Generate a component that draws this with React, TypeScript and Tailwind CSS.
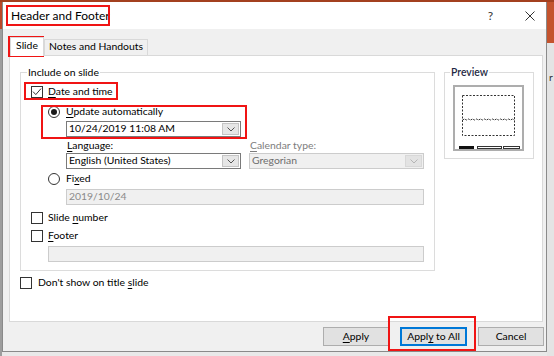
import React from "react";

const F = "font-['Segoe_UI',Lato,sans-serif]";

function U({ children }: { children: React.ReactNode }) {
  return <span className="underline underline-offset-[2px] decoration-[1px]">{children}</span>;
}

function Check({ checked = false }: { checked?: boolean }) {
  return (
    <span className="w-[12px] h-[12px] shrink-0 border border-[#333] bg-white flex items-center justify-center">
      {checked && (
        <svg width="10" height="10" viewBox="0 0 10 10">
          <path d="M1 4.6 L3.8 7.6 L9 1.6" stroke="#333" strokeWidth="1" fill="none" />
        </svg>
      )}
    </span>
  );
}

function Radio({ on = false }: { on?: boolean }) {
  return (
    <span className="w-[12px] h-[12px] shrink-0 rounded-full border border-[#333] bg-white flex items-center justify-center">
      {on && <span className="w-[6px] h-[6px] rounded-full bg-[#1a1a1a]" />}
    </span>
  );
}

function Chevron({ color }: { color: string }) {
  return (
    <svg width="8" height="5" viewBox="0 0 8 5">
      <path d="M0.5 0.5 L4 4 L7.5 0.5" stroke={color} strokeWidth="1" fill="none" />
    </svg>
  );
}

function Combo({ text, disabled = false }: { text: string; disabled?: boolean }) {
  return (
    <div
      className={`w-[175px] h-[16px] flex border ${
        disabled ? "border-[#cccccc] bg-[#f0f0f0] text-[#6d6d6d]" : "border-[#7a7a7a] bg-white"
      }`}
    >
      <span className="flex-1 pl-[2px] leading-[13px] whitespace-nowrap">{text}</span>
      <span
        className={`w-[17px] m-[1px] flex items-center justify-center border ${
          disabled ? "border-[#d8d8d8] bg-[#e3e3e3]" : "border-[#c4c4c4] bg-[#e6e6e6]"
        }`}
      >
        <Chevron color={disabled ? "#b5b5b5" : "#555"} />
      </span>
    </div>
  );
}

function Button({ children, focused = false }: { children: React.ReactNode; focused?: boolean }) {
  return (
    <div
      className={`h-[19px] flex items-center justify-center bg-[#e1e1e1] ${
        focused ? "w-[67px] border-2 border-[#0078d7]" : "w-[66px] border border-[#adadad]"
      }`}
    >
      {children}
    </div>
  );
}

function RedBox({ className }: { className: string }) {
  return <div className={`absolute border-2 border-[#f01414] pointer-events-none ${className}`} />;
}

export default function App() {
  return (
    <div
      className={`relative w-[554px] h-[356px] overflow-hidden bg-[#e9e9e9] text-[10.4px] leading-[13px] text-black ${F} flex flex-col`}
    >
      <div className="h-[2px] shrink-0 bg-[#a3401f]" />
      <div className="flex flex-1 min-h-0">
        <div className="w-[2px] shrink-0 flex flex-col">
          <div className="h-[27px] bg-[#b9492a]" />
          <div className="flex-1 bg-[#9d9d9d]" />
        </div>

        {/* dialog */}
        <div className="w-[545px] h-[350px] shrink-0 flex flex-col border-x border-b border-[#8a8a8a] bg-[#f0f0f0]">
          {/* title bar */}
          <div className="h-[27px] shrink-0 bg-white flex items-center justify-between pl-[8px] pr-[11px]">
            <span className="text-[12px] leading-[14px]">Header and Footer</span>
            <div className="flex items-center gap-[32px]">
              <span className="text-[12px] leading-[14px] text-[#333]">?</span>
              <svg width="10" height="10" viewBox="0 0 10 10">
                <path d="M0.5 0.5 L9.5 9.5 M9.5 0.5 L0.5 9.5" stroke="#333" strokeWidth="1" />
              </svg>
            </div>
          </div>

          <div className="flex-1 flex flex-col pl-[6px] pr-[3px] pt-[8px]">
            {/* tabs */}
            <div className="relative z-10 -mb-px flex items-end pl-[1px]">
              <div className="h-[19px] w-[34px] bg-white border border-b-0 border-[#d9d9d9] flex justify-center pt-[1px]">
                Slide
              </div>
              <div className="h-[17px] w-[104px] bg-[#f0f0f0] border border-[#d9d9d9] flex justify-center">
                Notes and Handouts
              </div>
            </div>

            {/* panel */}
            <div className="h-[267px] shrink-0 border border-[#d9d9d9] bg-white flex items-start">
              <div className="ml-[10px] w-[415px] flex flex-col">
                <fieldset className="mt-[9px] border border-[#dcdcdc] p-0 pb-[8px]">
                  <legend className="ml-[6px] px-[1px] leading-[14px]">Include on slide</legend>
                  <div className="pl-[10px] flex flex-col">
                    <div className="mt-[6px] h-[13px] flex items-center gap-[5px]">
                      <Check checked />
                      <span>
                        <U>D</U>ate and time
                      </span>
                    </div>
                    <div className="mt-[7px] ml-[17px] h-[13px] flex items-center gap-[6px]">
                      <Radio on />
                      <span>
                        <U>U</U>pdate automatically
                      </span>
                    </div>
                    <div className="mt-[3px] ml-[35px]">
                      <Combo text="10/24/2019 11:08 AM" />
                    </div>
                    <div className="mt-[2px] ml-[35px] flex gap-[8px] h-[13px]">
                      <span className="w-[175px] pl-[1px]">
                        <U>L</U>anguage:
                      </span>
                      <span className="w-[175px] pl-[1px] text-[#7d7d7d]">
                        <U>C</U>alendar type:
                      </span>
                    </div>
                    <div className="mt-[1px] ml-[35px] flex gap-[8px]">
                      <Combo text="English (United States)" />
                      <Combo text="Gregorian" disabled />
                    </div>
                    <div className="mt-[3px] ml-[17px] h-[13px] flex items-center gap-[6px]">
                      <Radio />
                      <span>
                        Fi<U>x</U>ed
                      </span>
                    </div>
                    <div className="mt-[4px] ml-[35px] w-[358px] h-[16px] border border-[#cccccc] bg-[#f0f0f0] pl-[2px] text-[#8a8a8a]">
                      2019/10/24
                    </div>
                    <div className="mt-[6px] h-[13px] flex items-center gap-[5px]">
                      <Check />
                      <span>
                        Slide <U>n</U>umber
                      </span>
                    </div>
                    <div className="mt-[5px] h-[13px] flex items-center gap-[5px]">
                      <Check />
                      <span>
                        <U>F</U>ooter
                      </span>
                    </div>
                    <div className="mt-[4px] ml-[17px] w-[376px] h-[16px] border border-[#cccccc] bg-[#f0f0f0]" />
                  </div>
                </fieldset>
                <div className="mt-[5px] h-[13px] flex items-center gap-[6px]">
                  <Check />
                  <span>
                    Don't show on title <U>s</U>lide
                  </span>
                </div>
              </div>

              <fieldset className="ml-[9px] mt-[9px] w-[90px] border border-[#dcdcdc] p-0 pb-[7px]">
                <legend className="ml-[5px] px-[1px] leading-[14px] font-semibold text-[#1f2a44]">Preview</legend>
                <div className="mt-[6px] ml-[8px] w-[71px] h-[66px] border-2 border-[#adadad] bg-white">
                  <svg width="67" height="62" viewBox="0 0 67 62">
                    <rect x="7.5" y="8.5" width="52" height="40" fill="none" stroke="#333" strokeWidth="1" strokeDasharray="2 1.5" />
                    <path
                      d="M7.5 33 L9.5 32 L11.5 33 L13.5 32 L15.5 33 L17.5 32 L19.5 33 L21.5 32 L23.5 33 L25.5 32 L27.5 33 L29.5 32 L31.5 33 L33.5 32 L35.5 33 L37.5 32 L39.5 33 L41.5 32 L43.5 33 L45.5 32 L47.5 33 L49.5 32 L51.5 33 L53.5 32 L55.5 33 L57.5 32 L59.5 33"
                      fill="none"
                      stroke="#333"
                      strokeWidth="1"
                      strokeDasharray="2 1"
                    />
                    <rect x="4" y="59" width="15" height="3" fill="#111" />
                    <rect x="22.5" y="59.5" width="24" height="2" fill="#fff" stroke="#333" strokeWidth="1" />
                    <rect x="48.5" y="59.5" width="16" height="2" fill="#fff" stroke="#333" strokeWidth="1" />
                  </svg>
                </div>
              </fieldset>
            </div>

            {/* buttons */}
            <div className="mt-[5px] -mr-[1px] flex justify-end gap-[11px]">
              <Button>
                <span>
                  <U>A</U>pply
                </span>
              </Button>
              <Button focused>
                <span>
                  Appl<U>y</U> to All
                </span>
              </Button>
              <Button>Cancel</Button>
            </div>
          </div>
        </div>

        <div className="flex-1 flex flex-col">
          <div className="h-[41px] bg-[#c4532d]" />
          <div className="flex-1 bg-[#e4e4e4] pt-[28px] pl-[2px] text-[#333]">r</div>
        </div>
      </div>

      {/* annotation boxes */}
      <RedBox className="left-[6px] top-[5px] w-[104px] h-[21px]" />
      <RedBox className="left-[8px] top-[36px] w-[36px] h-[21px]" />
      <RedBox className="left-[24px] top-[82px] w-[94px] h-[18px]" />
      <RedBox className="left-[41px] top-[105px] w-[206px] h-[34px]" />
      <RedBox className="left-[388px] top-[316px] w-[88px] h-[35px]" />
    </div>
  );
}
